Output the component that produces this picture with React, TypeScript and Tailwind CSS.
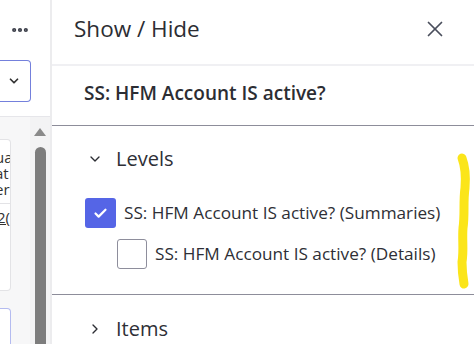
import React from 'react';
import { X, ChevronDown, ChevronRight, Check, MoreHorizontal } from 'lucide-react';

const font = { fontFamily: '"Open Sans", Arial, sans-serif' };

const Sidebar: React.FC = () => (
    <div className="w-[52px] h-[344px] shrink-0 border-r-2 border-[#ececee] flex flex-col overflow-hidden">
        <div className="h-[60px] shrink-0 flex items-center pl-[10px]">
            <MoreHorizontal className="w-[20px] h-[20px] text-[#3a3d48]" strokeWidth={3} />
        </div>
        <div className="w-[31px] h-[42px] shrink-0 border-[1.5px] border-l-0 border-[#7480dc] rounded-r-[4px] flex items-center justify-end pr-[9px]">
            <ChevronDown className="w-[14px] h-[14px] text-[#333]" strokeWidth={3} />
        </div>
        <div className="h-[14px] shrink-0" />
        <div className="h-[228px] shrink-0 flex border-t border-[#e6e6ea] bg-[#f7f7f8]">
            <div className="w-[30px] pt-[22px] flex flex-col">
                <div className="w-[11px] h-[152px] shrink-0 bg-white border border-l-0 border-[#e3e3e6] rounded-r-[4px] overflow-hidden text-[15px] leading-[16px] text-[#333] pt-[9px] whitespace-nowrap">
                    <div className="-ml-[5px]">ua</div>
                    <div className="-ml-[5px]">at</div>
                    <div className="-ml-[5px]">er</div>
                    <div className="border-t border-[#e3e3e6] mt-[6px] pt-[5px] -ml-[3px] underline">2(</div>
                </div>
                <div className="mt-[17px] w-[11px] h-[60px] shrink-0 bg-white border-[1.5px] border-l-0 border-[#b4bbf0] rounded-r-[4px]" />
            </div>
            <div className="w-[20px] flex flex-col items-center pt-[11px] bg-[#f3f3f4]">
                <div className="w-0 h-0 shrink-0 border-l-[6px] border-r-[6px] border-b-[8px] border-l-transparent border-r-transparent border-b-[#8a8a8a]" />
                <div className="mt-[11px] w-[11px] flex-1 bg-[#7d7d7d] rounded-t-[6px]" />
            </div>
        </div>
    </div>
);

const Box: React.FC<{ checked?: boolean }> = ({ checked }) =>
    checked ? (
        <div className="w-[31px] h-[30px] rounded-[3px] bg-[#5565e6] flex items-center justify-center shrink-0">
            <Check className="w-[15px] h-[15px] text-white" strokeWidth={3.5} />
        </div>
    ) : (
        <div className="w-[30px] h-[30px] rounded-[3px] border-[1.5px] border-[#8e8e9c] bg-white shrink-0" />
    );

const App: React.FC = () => {
    return (
        <div className="w-[474px] h-[344px] overflow-hidden bg-white flex text-[#2e2f36] relative" style={font}>
            <Sidebar />
            <div className="flex-1 h-[344px] flex flex-col overflow-hidden">
                <div className="h-[66px] shrink-0 flex items-center justify-between pl-[22px] pr-[26px] border-b-2 border-[#f0f0f3]">
                    <span className="text-[22.5px] font-medium text-[#2c2d33] -mt-[6px]">Show / Hide</span>
                    <X className="w-[26px] h-[26px] text-[#4a4e5c] -mt-[6px]" strokeWidth={1.6} />
                </div>
                <div className="h-[60px] shrink-0 flex items-center pl-[32px] pb-[4px] border-b border-[#8d8d9a]">
                    <span className="text-[19px] font-semibold text-[#2c2d33]">SS: HFM Account IS active?</span>
                </div>
                <div className="h-[169px] shrink-0 border-b border-[#8d8d9a] pl-[33px]">
                    <div className="h-[66px] flex items-center">
                        <ChevronDown className="w-[16px] h-[16px] text-[#2c2d33] ml-[2px]" strokeWidth={2} />
                        <span className="ml-[13px] text-[20px] font-medium">Levels</span>
                    </div>
                    <div className="flex items-center gap-[8px] h-[30px] mt-[6px]">
                        <Box checked />
                        <span className="text-[17.2px] whitespace-nowrap">SS: HFM Account IS active? (Summaries)</span>
                    </div>
                    <div className="flex items-center gap-[8px] h-[30px] mt-[11px] pl-[32px]">
                        <Box />
                        <span className="text-[17.2px] whitespace-nowrap">SS: HFM Account IS active? (Details)</span>
                    </div>
                </div>
                <div className="h-[68px] shrink-0 flex items-center pl-[33px]">
                    <ChevronRight className="w-[16px] h-[16px] text-[#2c2d33] ml-[2px]" strokeWidth={2} />
                    <span className="ml-[13px] text-[20px] font-medium">Items</span>
                </div>
            </div>
            <svg className="absolute left-[453px] top-[152px]" width="22" height="138" viewBox="0 0 22 138">
                <path
                    d="M9 6 C12 14 13 24 12 36 C10 50 12 62 10 76 C9 88 11 98 9 110 C9 118 10 126 11 132"
                    fill="none"
                    stroke="#fbe51a"
                    strokeWidth="9"
                    strokeLinecap="round"
                />
            </svg>
        </div>
    );
};

export default App;
